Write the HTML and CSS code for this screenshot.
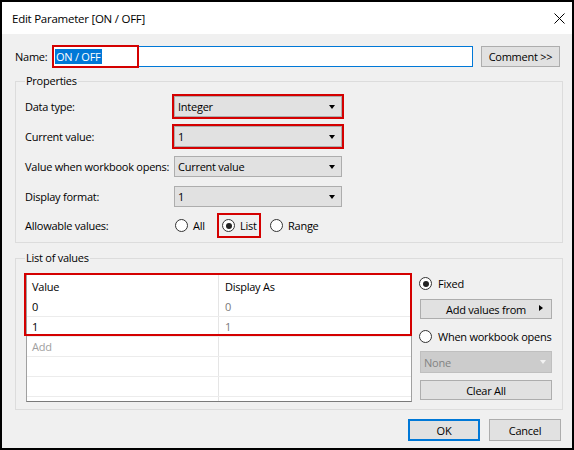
FILE: index.html
```html
<!DOCTYPE html>
<html>
<head>
<meta charset="utf-8">
<link rel="stylesheet" href="styles.css">
</head>
<body>
<div class="window">
  <div class="titlebar">
    <span class="title">Edit Parameter [ON / OFF]</span>
    <svg class="close" width="11" height="11" viewBox="0 0 11 11"><path d="M0.5 0.5 L10.5 10.5 M10.5 0.5 L0.5 10.5" stroke="#000" stroke-width="1" fill="none"/></svg>
  </div>
  <div class="content">
    <div class="name-row">
      <span class="name-label">Name:</span>
      <div class="name-input"><span class="sel">ON / OFF</span><span class="name-red"></span></div>
      <div class="btn comment">Comment &gt;&gt;</div>
    </div>

    <fieldset class="group props">
      <legend>Properties</legend>
      <div class="form">
        <div class="lbl">Data type:</div>
        <div class="select hl"><span>Integer</span></div>
        <div class="lbl">Current value:</div>
        <div class="select hl"><span>1</span></div>
        <div class="lbl">Value when workbook opens:</div>
        <div class="select"><span>Current value</span></div>
        <div class="lbl">Display format:</div>
        <div class="select"><span>1</span></div>
        <div class="lbl lbl-radio">Allowable values:</div>
        <div class="radios">
          <div class="radio radio-all"><span class="circle"></span><span>All</span></div>
          <div class="radio radio-list"><span class="circle on"></span><span>List</span></div>
          <div class="radio radio-range"><span class="circle"></span><span>Range</span></div>
        </div>
      </div>
    </fieldset>

    <fieldset class="group list">
      <legend>List of values</legend>
      <div class="list-body">
        <div class="table">
          <div class="rows">
            <div class="row head"><div class="cell">Value</div><div class="cell">Display As</div></div>
            <div class="row"><div class="cell">0</div><div class="cell dim">0</div></div>
            <div class="row"><div class="cell">1</div><div class="cell dim">1</div></div>
            <div class="row"><div class="cell add">Add</div><div class="cell"></div></div>
            <div class="row"><div class="cell"></div><div class="cell"></div></div>
            <div class="row"><div class="cell"></div><div class="cell"></div></div>
            <div class="row"><div class="cell"></div><div class="cell"></div></div>
          </div>
          <span class="table-red"></span>
        </div>
        <div class="side">
          <div class="radio side-radio"><span class="circle on"></span><span>Fixed</span></div>
          <div class="btn side-btn addbtn">Add values from</div>
          <div class="radio side-radio when"><span class="circle"></span><span>When workbook opens</span></div>
          <div class="select disabled"><span>None</span></div>
          <div class="btn side-btn clear">Clear All</div>
        </div>
      </div>
    </fieldset>

    <div class="footer">
      <div class="btn fbtn ok">OK</div>
      <div class="btn fbtn">Cancel</div>
    </div>
  </div>
</div>
</body>
</html>
```
FILE: styles.css
```css
* { box-sizing: border-box; }
html, body { margin: 0; padding: 0; }
body {
  width: 574px;
  height: 450px;
  overflow: hidden;
  font-family: "Open Sans", "Noto Sans", sans-serif;
  font-size: 11px;
  letter-spacing: -0.25px;
  line-height: 15px;
  color: #000;
  background: #fff;
  white-space: nowrap;
}
.window {
  width: 574px;
  height: 450px;
  border: 2px solid #000;
  background: #f0f0f0;
  display: flex;
  flex-direction: column;
}
.titlebar {
  flex: none;
  height: 32px;
  background: #fff;
  display: flex;
  align-items: center;
  justify-content: space-between;
  padding: 0 7px 0 10px;
}
.title { font-size: 11.5px; }
.close { display: block; }

.content {
  flex: 1;
  display: flex;
  flex-direction: column;
  padding: 0 9px 0 13px;
}

/* name row */
.name-row {
  display: flex;
  align-items: center;
  height: 21px;
  margin-top: 12px;
  margin-right: 3px;
}
.name-label { width: 37px; }
.name-input {
  position: relative;
  width: 421px;
  height: 21px;
  border: 1px solid #0078d7;
  background: #fff;
  display: flex;
  align-items: center;
  padding-left: 2px;
}
.sel {
  background: #0078d7;
  color: #fff;
  padding: 0 1px;
  line-height: 15px;
}
.name-red {
  position: absolute;
  left: -1px;
  top: -2px;
  width: 87px;
  height: 23px;
  border: 2px solid #d40000;
}
.btn {
  background: #e1e1e1;
  border: 1px solid #adadad;
  display: flex;
  align-items: center;
  justify-content: center;
  color: #000;
}
.comment {
  margin-left: 8px;
  width: 79px;
  height: 21px;
}

/* group boxes */
.group {
  margin: 0;
  min-width: 0;
  border: 1px solid #dcdcdc;
}
.group legend {
  padding: 0 1px;
  line-height: 14px;
}
.props {
  margin-top: 7px;
  padding: 8px 0 5px 9px;
}
.form {
  display: grid;
  grid-template-columns: 149px 168px;
  grid-auto-rows: 21px;
  row-gap: 9px;
  align-items: center;
}
.lbl-radio, .radios { margin-top: -2px; }
.select {
  height: 21px;
  background: #e1e1e1;
  border: 1px solid #adadad;
  display: flex;
  align-items: center;
  justify-content: space-between;
  padding: 0 6px 0 3px;
}
.select::after {
  content: "";
  width: 0;
  height: 0;
  border-left: 3.5px solid transparent;
  border-right: 3.5px solid transparent;
  border-top: 4px solid #000;
}
.hl { outline: 2px solid #d40000; outline-offset: 0; }

/* radios */
.radios {
  display: flex;
  align-items: center;
  margin-left: 1px;
}
.radio {
  display: flex;
  align-items: center;
  gap: 5px;
}
.radio-all { width: 31px; }
.circle {
  width: 13px;
  height: 13px;
  border: 1px solid #333;
  border-radius: 50%;
  background: #fff;
  display: flex;
  align-items: center;
  justify-content: center;
  flex: none;
}
.circle.on::after {
  content: "";
  width: 6px;
  height: 6px;
  border-radius: 50%;
  background: #222;
}
.radio-list {
  height: 25px;
  width: 44px;
  margin: -2px 0 -2px 11px;
  padding: 0 0 0 3px;
  border: 2px solid #d40000;
}
.radio-range { margin-left: 9px; }

/* list of values */
.list {
  margin-top: 8px;
  padding: 9px 10px 7px 10px;
}
.list legend { margin-left: -1px; }
.list-body {
  display: flex;
  gap: 7px;
}
.table {
  position: relative;
  width: 386px;
  height: 128px;
  flex: none;
  background: #fff;
  border: 1px solid #a0a0a0;
  border-bottom-color: #7a7a7a;
}
.rows {
  height: 126px;
  overflow: hidden;
}
.row {
  display: grid;
  grid-template-columns: 191px 1fr;
  height: 20px;
  border-bottom: 1px solid #ececec;
}
.row.head {
  height: 22px;
  border-bottom: none;
}
.cell {
  display: flex;
  align-items: center;
  padding-left: 5px;
}
.cell + .cell {
  border-left: 1px solid #e5e5e5;
  padding-left: 6px;
}
.dim { color: #7a7a7a; }
.add { color: #a0a0a0; }
.table-red {
  position: absolute;
  left: -3px;
  top: -2px;
  width: 388px;
  height: 63px;
  border: 2px solid #d40000;
}

.side {
  width: 133px;
  display: flex;
  flex-direction: column;
}
.side-radio {
  height: 19px;
  gap: 6px;
}
.side-btn {
  margin-left: 1px;
  height: 20px;
}
.addbtn {
  position: relative;
  margin-top: 6px;
}
.addbtn::after {
  content: "";
  position: absolute;
  right: 8px;
  top: 5px;
  width: 0;
  height: 0;
  border-top: 3.5px solid transparent;
  border-bottom: 3.5px solid transparent;
  border-left: 4px solid #000;
}
.when { margin-top: 8px; }
.select.disabled {
  margin-top: 5px;
  margin-left: 1px;
  height: 22px;
  background: #cccccc;
  border-color: #bfbfbf;
  color: #838383;
  padding-right: 5px;
}
.select.disabled::after { border-top-color: #f2f2f2; }
.clear { margin-top: 7px; }

.footer {
  display: flex;
  justify-content: flex-end;
  gap: 9px;
  margin-top: 9px;
  margin-right: 2px;
}
.fbtn {
  width: 72px;
  height: 22px;
}
.ok { border: 2px solid #0078d7; }
```
